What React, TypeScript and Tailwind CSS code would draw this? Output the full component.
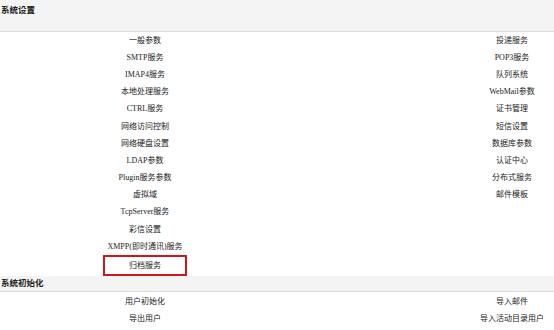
const leftItems = [
  "一般参数",
  "SMTP服务",
  "IMAP4服务",
  "本地处理服务",
  "CTRL服务",
  "网络访问控制",
  "网络硬盘设置",
  "LDAP参数",
  "Plugin服务参数",
  "虚拟域",
  "TcpServer服务",
  "彩信设置",
  "XMPP(即时通讯)服务",
  "归档服务",
];

const rightItems = [
  "投递服务",
  "POP3服务",
  "队列系统",
  "WebMail参数",
  "证书管理",
  "短信设置",
  "数据库参数",
  "认证中心",
  "分布式服务",
  "邮件模板",
];

const initLeft = ["用户初始化", "导出用户"];
const initRight = ["导入邮件", "导入活动目录用户"];

const font = {
  fontFamily: '"Liberation Serif", "Noto Sans CJK SC", serif',
};

const App = () => {
  return (
    <div
      className="w-[554px] h-[330px] overflow-hidden bg-white text-[#222]"
      style={font}
    >
      {/* 系统设置 */}
      <div className="h-[32px] bg-[#f4f4f4] border-b border-[#dcdcdc] pl-[1px] pt-[4px] text-[8.5px] leading-[12px] font-bold">
        系统设置
      </div>

      <div className="grid grid-cols-[290px_1fr_84px]">
        <div className="flex flex-col">
          {leftItems.map((item, i) => (
            <div
              key={item}
              className="h-[17.2px] flex items-center justify-center text-[8px]"
            >
              {i === leftItems.length - 1 ? (
                <div className="w-[84px] h-[21px] border-2 border-[#d0161b] flex items-center justify-center mt-[3px]">
                  {item}
                </div>
              ) : (
                item
              )}
            </div>
          ))}
        </div>
        <div />
        <div className="flex flex-col">
          {rightItems.map((item) => (
            <div
              key={item}
              className="h-[17.2px] flex items-center justify-center text-[8px] whitespace-nowrap"
            >
              {item}
            </div>
          ))}
        </div>
      </div>

      {/* 系统初始化 */}
      <div className="mt-[3px] h-[16px] bg-[#f4f4f4] border-b border-[#dcdcdc] pl-[1px] flex items-center text-[8.5px] font-bold">
        系统初始化
      </div>

      <div className="grid grid-cols-[290px_1fr_84px] pt-[2px]">
        <div className="flex flex-col">
          {initLeft.map((item) => (
            <div
              key={item}
              className="h-[17px] flex items-center justify-center text-[8px]"
            >
              {item}
            </div>
          ))}
        </div>
        <div />
        <div className="flex flex-col">
          {initRight.map((item) => (
            <div
              key={item}
              className="h-[17px] flex items-center justify-center text-[8px] whitespace-nowrap"
            >
              {item}
            </div>
          ))}
        </div>
      </div>
    </div>
  );
};

export default App;
